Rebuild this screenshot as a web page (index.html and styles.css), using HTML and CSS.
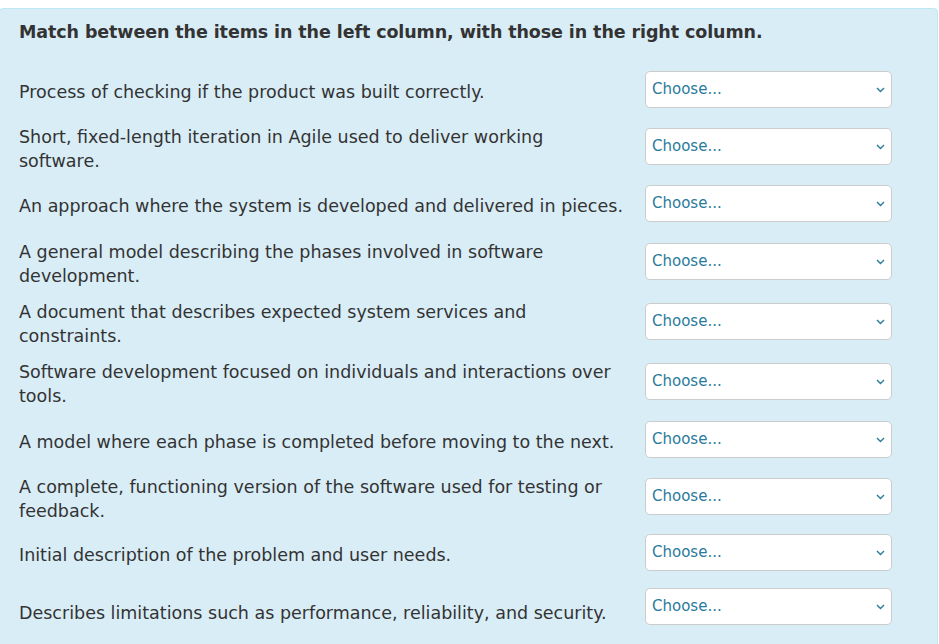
FILE: index.html
```html
<!DOCTYPE html>
<html lang="en">
<head>
<meta charset="utf-8">
<title>Match question</title>
<link rel="stylesheet" href="styles.css">
</head>
<body>
<div class="que">
  <p class="title">Match between the items in the left column, with those in the right column.</p>
  <div class="answer">
    <div class="text">Process of checking if the product was built correctly.</div>
    <div class="control"><select class="choice"><option>Choose...</option></select><svg class="chev" viewBox="0 0 9 6" width="9" height="6"><polyline points="1,1 4.5,4.5 8,1"/></svg></div>

    <div class="text">Short, fixed-length iteration in Agile used to deliver working software.</div>
    <div class="control"><select class="choice"><option>Choose...</option></select><svg class="chev" viewBox="0 0 9 6" width="9" height="6"><polyline points="1,1 4.5,4.5 8,1"/></svg></div>

    <div class="text">An approach where the system is developed and delivered in pieces.</div>
    <div class="control"><select class="choice"><option>Choose...</option></select><svg class="chev" viewBox="0 0 9 6" width="9" height="6"><polyline points="1,1 4.5,4.5 8,1"/></svg></div>

    <div class="text">A general model describing the phases involved in software development.</div>
    <div class="control"><select class="choice"><option>Choose...</option></select><svg class="chev" viewBox="0 0 9 6" width="9" height="6"><polyline points="1,1 4.5,4.5 8,1"/></svg></div>

    <div class="text">A document that describes expected system services and constraints.</div>
    <div class="control"><select class="choice"><option>Choose...</option></select><svg class="chev" viewBox="0 0 9 6" width="9" height="6"><polyline points="1,1 4.5,4.5 8,1"/></svg></div>

    <div class="text">Software development focused on individuals and interactions over tools.</div>
    <div class="control"><select class="choice"><option>Choose...</option></select><svg class="chev" viewBox="0 0 9 6" width="9" height="6"><polyline points="1,1 4.5,4.5 8,1"/></svg></div>

    <div class="text">A model where each phase is completed before moving to the next.</div>
    <div class="control"><select class="choice"><option>Choose...</option></select><svg class="chev" viewBox="0 0 9 6" width="9" height="6"><polyline points="1,1 4.5,4.5 8,1"/></svg></div>

    <div class="text">A complete, functioning version of the software used for testing or feedback.</div>
    <div class="control"><select class="choice"><option>Choose...</option></select><svg class="chev" viewBox="0 0 9 6" width="9" height="6"><polyline points="1,1 4.5,4.5 8,1"/></svg></div>

    <div class="text">Initial description of the problem and user needs.</div>
    <div class="control"><select class="choice"><option>Choose...</option></select><svg class="chev" viewBox="0 0 9 6" width="9" height="6"><polyline points="1,1 4.5,4.5 8,1"/></svg></div>

    <div class="text last">Describes limitations such as performance, reliability, and security.</div>
    <div class="control"><select class="choice"><option>Choose...</option></select><svg class="chev" viewBox="0 0 9 6" width="9" height="6"><polyline points="1,1 4.5,4.5 8,1"/></svg></div>
  </div>
</div>
</body>
</html>
```
FILE: styles.css
```css
html, body {
  margin: 0;
  padding: 0;
  background: #ffffff;
}

body {
  padding-top: 8px;
  font-family: "DejaVu Sans", Verdana, sans-serif;
  color: #333333;
}

.que {
  margin-left: -1px;
  width: 939px;
  box-sizing: border-box;
  border: 1px solid #bce8f1;
  border-radius: 4px;
  background: #d9edf7;
  padding: 11px 19px 40px 19px;
}

.title {
  margin: 0;
  font-size: 17.5px;
  line-height: 24px;
  font-weight: bold;
  letter-spacing: -0.1px;
}

.answer {
  margin-top: 19px;
  display: grid;
  grid-template-columns: 605px 247px;
  grid-template-rows: 57px 57px 57px 59px 61px 59px 57px 57px 55px 53px;
  column-gap: 21px;
}

.text {
  align-self: center;
  font-size: 17.5px;
  line-height: 24px;
}

.text.last {
  margin-top: 8px;
}

.control {
  align-self: center;
  position: relative;
  height: 37px;
  margin-bottom: 5px;
}

.choice {
  appearance: none;
  -webkit-appearance: none;
  display: block;
  width: 100%;
  height: 37px;
  box-sizing: border-box;
  margin: 0;
  padding: 0 24px 0 6px;
  border: 1px solid #cccccc;
  border-radius: 5px;
  background: #ffffff;
  color: #2a7b9b;
  font-family: "DejaVu Sans", Verdana, sans-serif;
  font-size: 15px;
}

.chev {
  position: absolute;
  right: 7px;
  top: 16px;
  fill: none;
  stroke: #2a7b9b;
  stroke-width: 1.4;
}
```
